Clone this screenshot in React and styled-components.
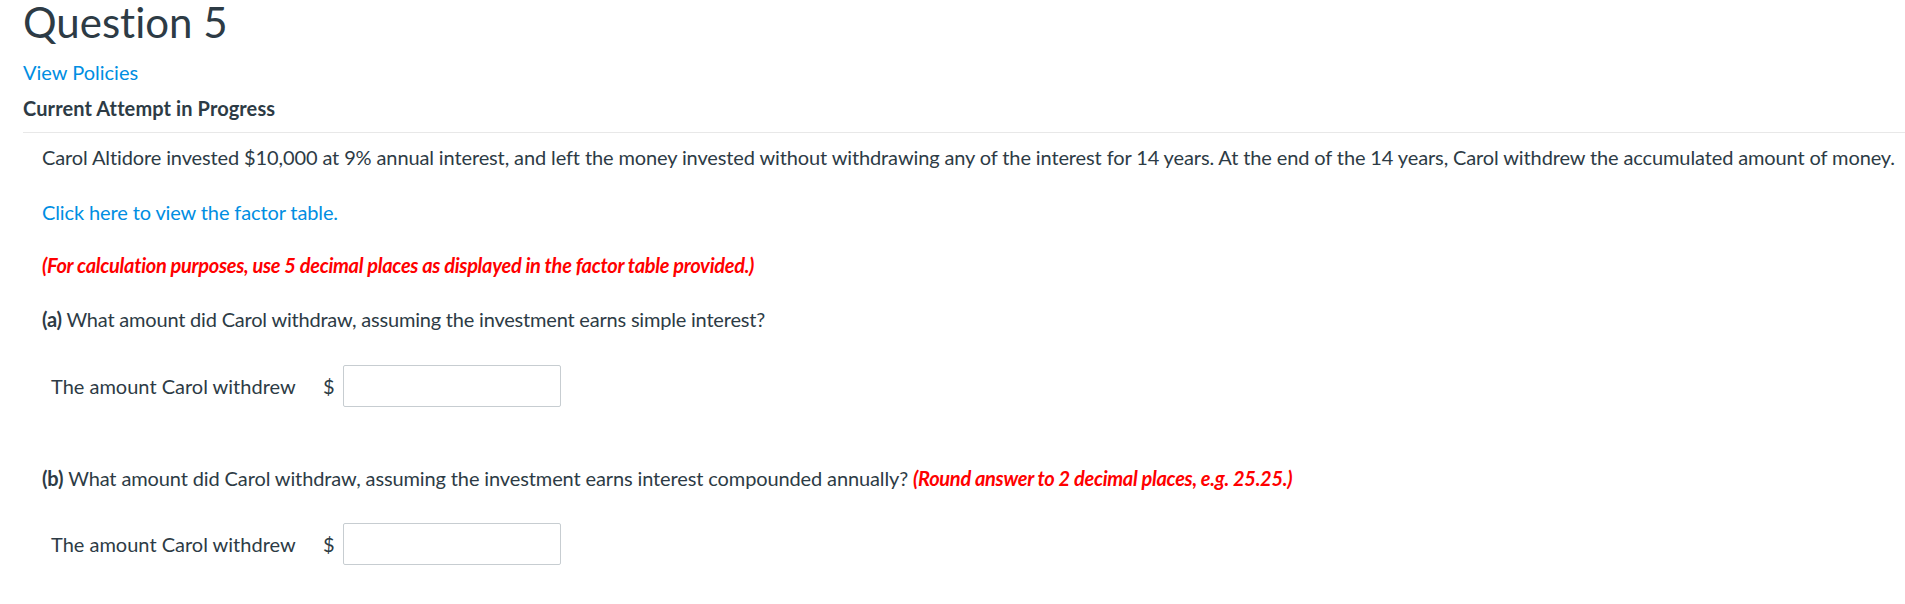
import React from 'react';
import styled, { createGlobalStyle } from 'styled-components';

const GlobalStyle = createGlobalStyle`
  body {
    margin: 0;
    background: #ffffff;
    font-family: Lato, "Open Sans", "Liberation Sans", sans-serif;
    font-variant-ligatures: none;
    color: #2d3b45;
  }
`;

const Page = styled.div`
  padding: 0 0 0 23px;
`;

const Title = styled.h1`
  margin: 0;
  font-size: 42px;
  line-height: 44px;
  font-weight: 400;
`;

const PolicyLink = styled.a`
  display: block;
  margin-top: 16px;
  font-size: 20px;
  line-height: 24px;
  color: #008ee2;
  text-decoration: none;
`;

const Status = styled.div`
  margin-top: 12px;
  font-size: 20px;
  line-height: 24px;
  font-weight: 700;
  letter-spacing: 0.1px;
`;

const Divider = styled.hr`
  margin: 12px 0 0;
  border: 0;
  border-top: 1px solid #e8e8e8;
`;

const Content = styled.div`
  padding-left: 19px;
`;

const Para = styled.p`
  margin: ${p => p.$top}px 0 0;
  font-size: 20px;
  line-height: 24px;
  letter-spacing: ${p => p.$tight ? '-0.2px' : '-0.12px'};
`;

const FactorLink = styled.a`
  color: #008ee2;
  text-decoration: none;
`;

const Warning = styled.em`
  color: #ff0000;
  font-weight: 700;
  letter-spacing: -0.3px;
`;

const AnswerRow = styled.div`
  display: flex;
  align-items: center;
  margin-top: ${p => p.$top}px;
  padding-left: 9px;
  height: 42px;
`;

const Label = styled.span`
  font-size: 20px;
  width: 272px;
`;

const Currency = styled.span`
  font-size: 20px;
  width: 20px;
`;

const AmountInput = styled.input`
  box-sizing: border-box;
  width: 218px;
  height: 42px;
  border: 1px solid #c7cdd1;
  border-radius: 2px;
  font-family: inherit;
  font-size: 18px;
`;

export default function App() {
  return (
    <Page>
      <GlobalStyle />
      <Title>Question 5</Title>
      <PolicyLink href="#">View Policies</PolicyLink>
      <Status>Current Attempt in Progress</Status>
      <Divider />
      <Content>
        <Para $top={12}>
          Carol Altidore invested $10,000 at 9% annual interest, and left the money invested without withdrawing any of the interest for 14 years. At the end of the 14 years, Carol withdrew the accumulated amount of money.
        </Para>
        <Para $top={31}>
          <FactorLink href="#">Click here to view the factor table.</FactorLink>
        </Para>
        <Para $top={29}>
          <Warning>(For calculation purposes, use 5 decimal places as displayed in the factor table provided.)</Warning>
        </Para>
        <Para $top={30} $tight>
          <strong>(a)</strong> What amount did Carol withdraw, assuming the investment earns simple interest?
        </Para>
        <AnswerRow $top={34}>
          <Label>The amount Carol withdrew</Label>
          <Currency>$</Currency>
          <AmountInput type="text" />
        </AnswerRow>
        <Para $top={59}>
          <strong>(b)</strong> What amount did Carol withdraw, assuming the investment earns interest compounded annually?{' '}
          <Warning>(Round answer to 2 decimal places, e.g. 25.25.)</Warning>
        </Para>
        <AnswerRow $top={33}>
          <Label>The amount Carol withdrew</Label>
          <Currency>$</Currency>
          <AmountInput type="text" />
        </AnswerRow>
      </Content>
    </Page>
  );
}
